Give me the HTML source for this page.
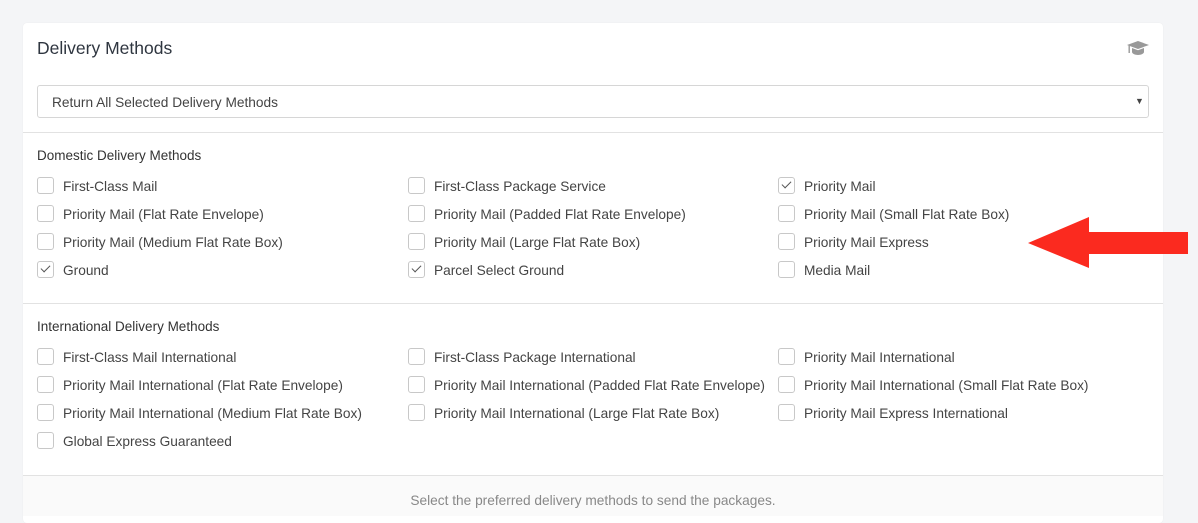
<!DOCTYPE html>
<html><head><style>
body{margin:0;background:#f4f5f7;font-family:"Liberation Sans",sans-serif;color:#333;width:1198px;height:507px;overflow:hidden;position:relative}
.card{position:absolute;left:23px;top:23px;width:1140px;height:500px;background:#fff;border-radius:4px;box-shadow:0 0 1px rgba(0,0,0,.08)}
.t{position:absolute;font-size:13.7px;color:#444;white-space:nowrap}
.cb{position:absolute;width:15px;height:15px;border:1px solid #c8c8c8;border-radius:3px;background:#fff}
.cb.c::after{content:"";position:absolute;left:5px;top:1px;width:4px;height:8px;border:solid #555;border-width:0 1.6px 1.6px 0;transform:rotate(45deg)}
.h{position:absolute;font-size:13.5px;color:#333;left:37px}
.hr{position:absolute;left:23px;width:1140px;height:1px;background:#e2e2e2}
</style></head><body>
<div class="card"></div>
<div class="t" style="left:37px;top:38px;font-size:17.5px;color:#2f3640">Delivery Methods</div>
<svg style="position:absolute;left:1126px;top:40px" width="24" height="16" viewBox="0 0 24 16"><path d="M12 1L1 5l11 4 11-4z" fill="#999"/><path d="M6 8v4c0 1.5 3 3 6 3s6-1.5 6-3V8l-6 2.2z" fill="#999"/><rect x="2.5" y="5" width="1.4" height="8" fill="#999"/></svg>
<div style="position:absolute;left:37px;top:85px;width:1110px;height:31px;border:1px solid #d6d6d6;border-radius:3px"></div>
<div class="t" style="left:52px;top:95px">Return All Selected Delivery Methods</div>
<div class="t" style="left:1135px;top:96px;font-size:9px">▼</div>
<div class="hr" style="top:132px"></div>
<div class="h" style="top:148px">Domestic Delivery Methods</div>
<div class="hr" style="top:303px"></div>
<div class="h" style="top:319px">International Delivery Methods</div>
<div style="position:absolute;left:23px;top:475px;width:1140px;height:40px;background:#fafafa;border-top:1px solid #e2e2e2"></div>
<div class="t" style="left:0;width:1186px;text-align:center;top:493px;color:#888">Select the preferred delivery methods to send the packages.</div>
<svg style="position:absolute;left:1028px;top:217px" width="162" height="51"><path d="M0 26L61 0v15h99v22H61v14z" fill="#fb2a1f"/></svg>
<div id="items"></div>
<script>
const cols=[37,408,778];
const dom=[["First-Class Mail",0],["First-Class Package Service",0],["Priority Mail",1],
["Priority Mail (Flat Rate Envelope)",0],["Priority Mail (Padded Flat Rate Envelope)",0],["Priority Mail (Small Flat Rate Box)",0],
["Priority Mail (Medium Flat Rate Box)",0],["Priority Mail (Large Flat Rate Box)",0],["Priority Mail Express",0],
["Ground",1],["Parcel Select Ground",1],["Media Mail",0]];
const intl=[["First-Class Mail International",0],["First-Class Package International",0],["Priority Mail International",0],
["Priority Mail International (Flat Rate Envelope)",0],["Priority Mail International (Padded Flat Rate Envelope)",0],["Priority Mail International (Small Flat Rate Box)",0],
["Priority Mail International (Medium Flat Rate Box)",0],["Priority Mail International (Large Flat Rate Box)",0],["Priority Mail Express International",0],
["Global Express Guaranteed",0]];
let h="";
function add(list,y0){list.forEach((it,i)=>{const x=cols[i%3],y=y0+Math.floor(i/3)*28;
h+=`<div class="cb${it[1]?' c':''}" style="left:${x}px;top:${y-9}px"></div><div class="t" style="left:${x+26}px;top:${y-7}px">${it[0]}</div>`;});}
add(dom,186);add(intl,357);
document.getElementById("items").innerHTML=h;
</script>
</body></html>
